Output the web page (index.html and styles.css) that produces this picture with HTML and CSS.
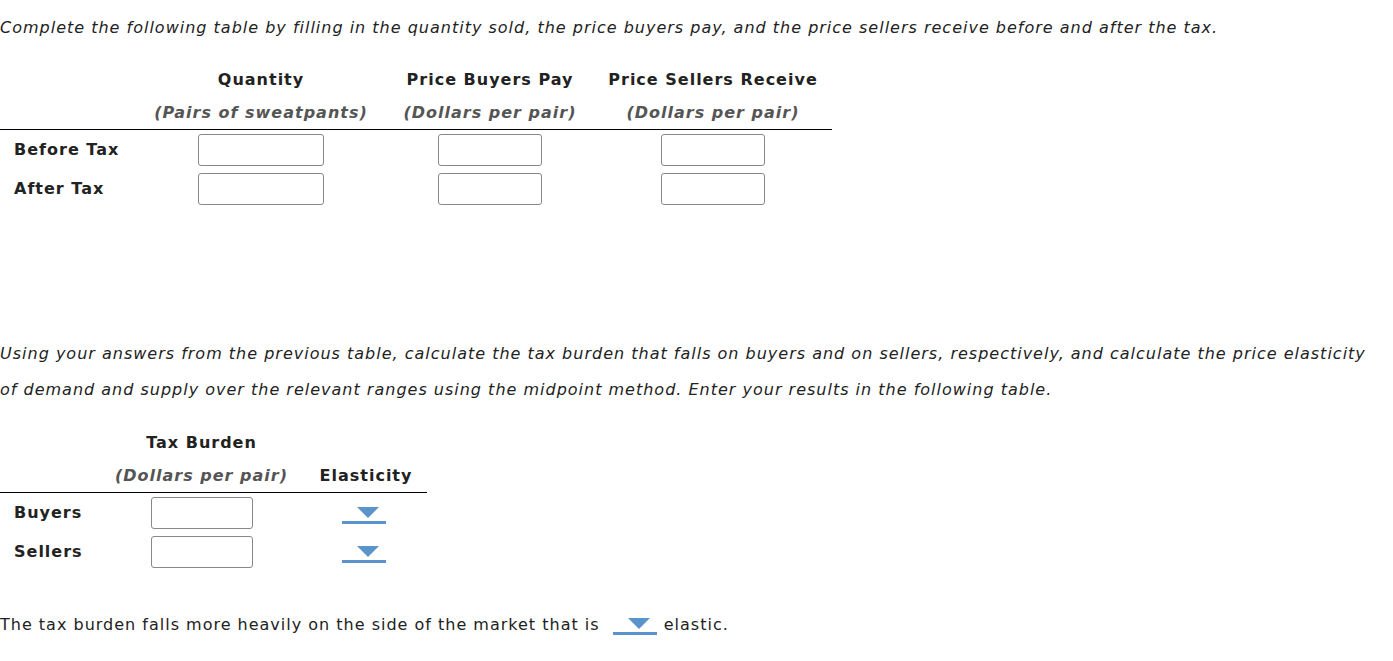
FILE: index.html
```html
<!DOCTYPE html>
<html>
<head>
<meta charset="utf-8">
<link rel="stylesheet" href="styles.css">
</head>
<body>
<p class="para first">Complete the following table by filling in the quantity sold, the price buyers pay, and the price sellers receive before and after the tax.</p>

<table class="grid grid-one">
  <colgroup>
    <col class="c-label1"><col class="c-qty"><col class="c-buy"><col class="c-sell">
  </colgroup>
  <thead>
    <tr class="hrow"><th></th><th>Quantity</th><th>Price Buyers Pay</th><th>Price Sellers Receive</th></tr>
    <tr class="hrow sub"><th></th><th class="unit">(Pairs of sweatpants)</th><th class="unit">(Dollars per pair)</th><th class="unit">(Dollars per pair)</th></tr>
  </thead>
  <tbody>
    <tr class="brow"><td class="lbl">Before Tax</td><td><span class="box w-qty"></span></td><td><span class="box w-price"></span></td><td><span class="box w-price"></span></td></tr>
    <tr class="brow"><td class="lbl">After Tax</td><td><span class="box w-qty"></span></td><td><span class="box w-price"></span></td><td><span class="box w-price"></span></td></tr>
  </tbody>
</table>

<p class="para second">Using your answers from the previous table, calculate the tax burden that falls on buyers and on sellers, respectively, and calculate the price elasticity of demand and supply over the relevant ranges using the midpoint method. Enter your results in the following table.</p>

<table class="grid grid-two">
  <colgroup>
    <col class="c-label2"><col class="c-burden"><col class="c-elast">
  </colgroup>
  <thead>
    <tr class="hrow"><th></th><th>Tax Burden</th><th></th></tr>
    <tr class="hrow sub"><th></th><th class="unit">(Dollars per pair)</th><th>Elasticity</th></tr>
  </thead>
  <tbody>
    <tr class="brow"><td class="lbl">Buyers</td><td><span class="box w-burden"></span></td><td><span class="drop"><span class="tri"></span></span></td></tr>
    <tr class="brow"><td class="lbl">Sellers</td><td><span class="box w-burden"></span></td><td><span class="drop"><span class="tri"></span></span></td></tr>
  </tbody>
</table>

<p class="para last">The tax burden falls more heavily on the side of the market that is <span class="drop inline"><span class="tri"></span></span> elastic.</p>
</body>
</html>
```

FILE: styles.css
```css
html, body {
  margin: 0;
  padding: 0;
  background: #ffffff;
}
body {
  font-family: "DejaVu Sans", Verdana, sans-serif;
  font-size: 16px;
  letter-spacing: 1px;
  color: #222222;
}
.para {
  margin: 0;
  line-height: 36px;
}
.first {
  font-style: italic;
  padding-top: 10px;
}
.second {
  font-style: italic;
  margin-top: 128px;
  max-width: 1375px;
}
.last {
  margin-top: 36px;
}
.grid {
  border-collapse: collapse;
  table-layout: fixed;
}
.grid-one {
  width: 832px;
  margin-top: 17px;
}
.grid-two {
  width: 427px;
  margin-top: 18px;
}
.c-label1 { width: 136px; }
.c-qty { width: 250px; }
.c-buy { width: 208px; }
.c-sell { width: 238px; }
.c-label2 { width: 98px; }
.c-burden { width: 207px; }
.c-elast { width: 122px; }
.grid th {
  font-weight: bold;
  text-align: center;
  padding: 0;
  height: 33px;
  white-space: nowrap;
}
.grid thead tr.sub th {
  border-bottom: 1px solid #000000;
}
.grid th.unit {
  font-style: italic;
  color: #555555;
}
.grid td {
  padding: 0;
  height: 39px;
  text-align: center;
  vertical-align: middle;
}
.grid td.lbl {
  text-align: left;
  font-weight: bold;
  padding-left: 14px;
  color: #222222;
}
.box {
  display: inline-block;
  height: 30px;
  border: 1px solid #888888;
  border-radius: 3px;
  vertical-align: middle;
  background: #ffffff;
}
.w-qty { width: 124px; }
.w-price { width: 102px; }
.w-burden { width: 100px; }
.drop {
  display: inline-block;
  position: relative;
  width: 44px;
  height: 20px;
  border-bottom: 3px solid #5a94cb;
  vertical-align: middle;
}
.grid .drop {
  margin-left: -5px;
}
.drop.inline {
  vertical-align: -5px;
  margin: 0 1px 0 7px;
}
.tri {
  position: absolute;
  right: 7px;
  top: 6px;
  width: 0;
  height: 0;
  border-left: 11px solid transparent;
  border-right: 11px solid transparent;
  border-top: 11px solid #5a94cb;
}
```
